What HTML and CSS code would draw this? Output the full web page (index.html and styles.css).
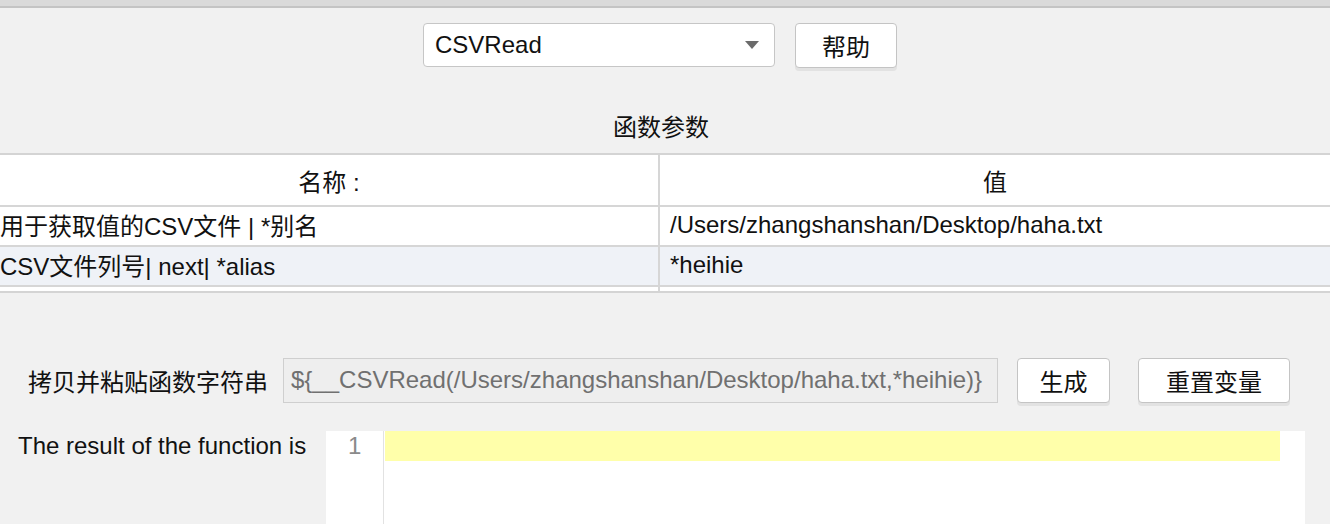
FILE: index.html
```html
<!DOCTYPE html>
<html lang="zh-CN">

<head>
    <meta charset="UTF-8">
    <title>函数助手</title>
    <link rel="stylesheet" href="styles.css">
</head>

<body>
    <div class="titlebar"></div>

    <div class="toolbar">
        <div class="combo">
            <span>CSVRead</span>
            <span class="caret"></span>
        </div>
        <button class="btn help">帮助</button>
    </div>

    <div class="section-title">函数参数</div>

    <div class="params">
        <div class="row head">
            <div class="cell name">名称 :</div>
            <div class="cell">值</div>
        </div>
        <div class="row">
            <div class="cell name">用于获取值的CSV文件 | *别名</div>
            <div class="cell">/Users/zhangshanshan/Desktop/haha.txt</div>
        </div>
        <div class="row alt">
            <div class="cell name">CSV文件列号| next| *alias</div>
            <div class="cell">*heihie</div>
        </div>
        <div class="row filler">
            <div class="cell name"></div>
            <div class="cell"></div>
        </div>
    </div>

    <div class="gen-row">
        <label class="gen-label">拷贝并粘贴函数字符串</label>
        <div class="func-string">${__CSVRead(/Users/zhangshanshan/Desktop/haha.txt,*heihie)}</div>
        <button class="btn gen">生成</button>
        <button class="btn reset">重置变量</button>
    </div>

    <div class="result-row">
        <div class="result-label">The result of the function is</div>
        <div class="editor">
            <div class="gutter">1</div>
            <div class="lines">
                <div class="current-line"></div>
            </div>
        </div>
    </div>
</body>

</html>
```

FILE: styles.css
```css
body {
    margin: 0;
    width: 1330px;
    height: 524px;
    overflow: hidden;
    background-color: #f1f1f1;
    font-family: "Liberation Sans", "Noto Sans CJK SC", sans-serif;
    font-size: 24px;
    color: #111;
}

.titlebar {
    height: 6px;
    background-color: #dadada;
    border-bottom: 2px solid #c4c4c4;
}

.toolbar {
    display: flex;
    justify-content: center;
    gap: 20px;
    padding-top: 15px;
    padding-right: 10px;
}

.combo {
    box-sizing: border-box;
    width: 352px;
    height: 44px;
    display: flex;
    align-items: center;
    justify-content: space-between;
    padding: 0 15px 0 11px;
    background: white;
    border: 1px solid #c6c6c6;
    border-radius: 4px;
}

.caret {
    width: 0;
    height: 0;
    border-left: 7px solid transparent;
    border-right: 7px solid transparent;
    border-top: 8px solid #6b6b6b;
}

.btn {
    box-sizing: border-box;
    height: 45px;
    padding: 0;
    font-family: inherit;
    font-size: 24px;
    color: #111;
    background: white;
    border: 1px solid #c4c4c4;
    border-radius: 4px;
    box-shadow: 0 3px 0 #e2e2e2;
}

.help {
    width: 102px;
}

.section-title {
    margin-top: 45px;
    height: 30px;
    line-height: 30px;
    text-align: center;
    padding-right: 8px;
}

.params {
    margin-top: 10px;
    background: white;
    border-top: 2px solid #d4d4d4;
    border-bottom: 2px solid #d4d4d4;
}

.row {
    display: grid;
    grid-template-columns: 660px 1fr;
    height: 38px;
    border-bottom: 2px solid #d6d6d6;
}

.row.head {
    height: 50px;
}

.row.alt {
    background-color: #eff2f7;
}

.row.filler {
    height: 4px;
    border-bottom: none;
}

.cell {
    display: flex;
    align-items: center;
    padding-left: 10px;
    padding-bottom: 3px;
    white-space: nowrap;
    overflow: hidden;
}

.cell.name {
    padding-left: 0;
    border-right: 2px solid #d6d6d6;
}

.head .cell {
    justify-content: center;
    padding: 0;
}

.gen-row {
    display: flex;
    align-items: center;
    margin-top: 64px;
    padding-left: 28px;
    height: 46px;
}

.gen-label {
    margin-right: 15px;
}

.func-string {
    box-sizing: border-box;
    width: 715px;
    height: 45px;
    display: flex;
    align-items: center;
    padding-left: 7px;
    color: #707070;
    background-color: #eeeeee;
    border: 1px solid #cfcfcf;
    white-space: nowrap;
    overflow: hidden;
}

.gen {
    width: 93px;
    margin-left: 19px;
}

.reset {
    width: 152px;
    margin-left: 28px;
}

.result-row {
    display: flex;
    margin-top: 28px;
    padding-left: 18px;
}

.result-label {
    width: 294px;
    line-height: 30px;
    margin-right: 14px;
    white-space: nowrap;
}

.editor {
    display: flex;
    width: 979px;
    height: 100px;
    background: white;
}

.gutter {
    width: 58px;
    box-sizing: border-box;
    padding-left: 22px;
    line-height: 30px;
    color: #8a8a8a;
    border-right: 1px solid #e2e2e2;
}

.lines {
    flex: 1;
    padding-left: 1px;
    padding-right: 25px;
}

.current-line {
    height: 30px;
    background-color: #ffffaa;
}
```
